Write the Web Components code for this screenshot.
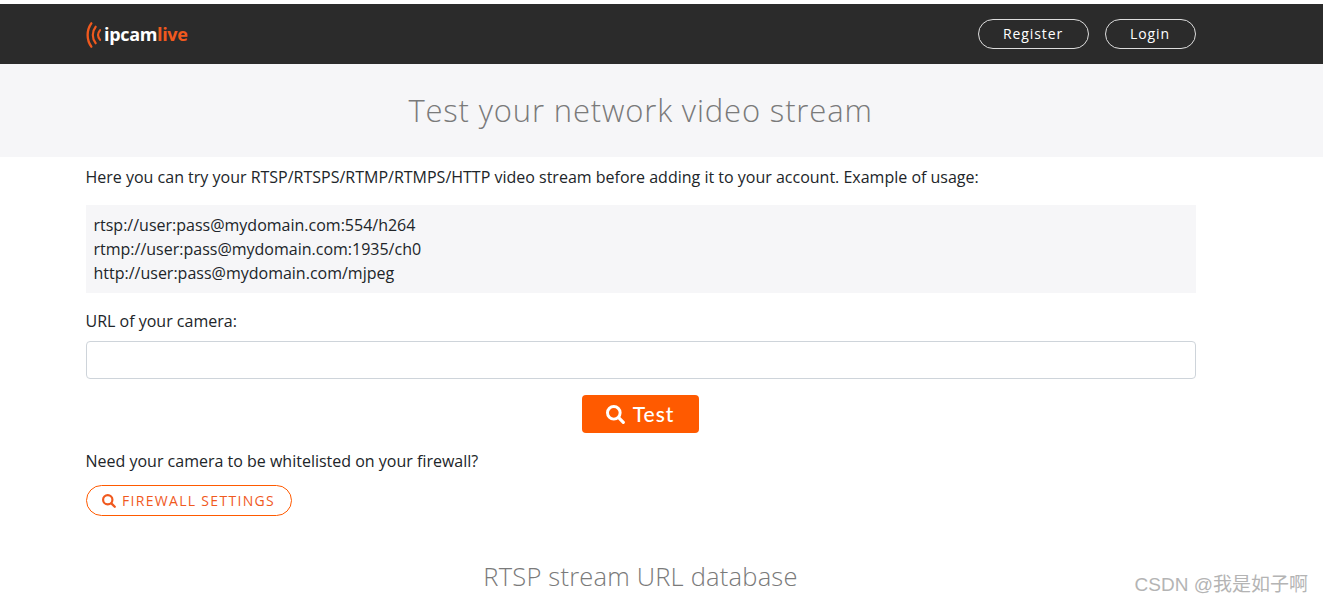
<!DOCTYPE html>
<html lang="en"><head><meta charset="utf-8"><title>Test your network video stream</title>
<style>
html,body{margin:0;padding:0;background:#fff;height:605px;overflow:hidden}
body{font-family:"Open Sans",sans-serif;font-size:16px;color:#212529;position:relative}
</style></head><body>
<ipc-header></ipc-header>
<ipc-hero>Test your network video stream</ipc-hero>
<ipc-main></ipc-main>
<ipc-watermark>CSDN @我是如子啊</ipc-watermark>
<script>
const SEARCH=s=>`<svg width="${s}" height="${s}" viewBox="0 0 18 18" fill="none" stroke="currentColor" aria-hidden="true"><circle cx="7.4" cy="7.4" r="6" stroke-width="2.8"/><path d="M12 12L16.4 16.4" stroke-width="3" stroke-linecap="round"/></svg>`;
function def(name,css,html){customElements.define(name,class extends HTMLElement{constructor(){super();this.attachShadow({mode:'open'}).innerHTML=`<style>${css}</style>${html}`;}});}

def('ipc-pill',`
:host{display:inline-flex;box-sizing:border-box;align-items:center;justify-content:center;height:var(--h,30px);width:var(--w,auto);border:1px solid var(--c,#ddd);border-radius:16px;color:var(--t,#fff);font:400 14px "Open Sans",sans-serif;letter-spacing:var(--ls,.9px);gap:var(--g,0)}
span{position:relative;top:var(--up,0)}
`,`<span><slot></slot></span>`);

def('ipc-header',`
:host{display:block;margin-top:4px;height:60px;background:#2b2b2b;font-family:"Open Sans",sans-serif}
.in{height:100%;width:1110px;margin-left:85.5px;display:flex;align-items:center;justify-content:space-between}
.logo{display:flex;align-items:center;gap:2px;font:700 18px "Open Sans",sans-serif;letter-spacing:-.33px;color:#fff}
.logo b{font-weight:700;color:#f0591e}
.logo svg{display:block;margin-top:1px}
nav{display:flex;gap:16px;--up:-1px}
`,`<div class="in"><div class="logo"><svg width="16.5" height="28" viewBox="0 0 17 28" fill="none" stroke="#f0591e" stroke-linecap="round"><path d="M5.5 2C.4 9 .4 19 5.5 26" stroke-width="2.4"/><path d="M10 5.5C6 10.5 6 17.5 10 22.5" stroke-width="2.2"/><path d="M14.5 9C12 12 12 16 14.5 19" stroke-width="2.2"/></svg><span>ipcam<b>live</b></span></div>
<nav><ipc-pill style="--w:111px">Register</ipc-pill><ipc-pill style="--w:91px">Login</ipc-pill></nav></div>`);

def('ipc-hero',`
:host{display:block;height:93px;background:#f6f6f8}
h1{margin:0;width:1281px;text-align:center;font:300 31px/92px "Open Sans",sans-serif;letter-spacing:.84px;color:#7a7a7a}
`,`<h1><slot></slot></h1>`);

def('ipc-code',`
:host{display:block;background:#f6f6f8;padding:8px;line-height:24px;color:#212529}
`,`<slot></slot>`);

def('ipc-main',`
:host{display:block;width:1110px;margin-left:85.5px;font:400 16px/24px "Open Sans",sans-serif;color:#212529}
p{margin:0}
.intro{padding-top:8px}
ipc-code{margin-top:16px}
.lab{margin-top:16px}
.inp{box-sizing:border-box;display:block;width:100%;height:38px;margin-top:8px;border:1px solid #ced4da;border-radius:4px;background:#fff}
.c{display:flex;justify-content:center;margin-top:16px;margin-left:-1px}
.test{box-sizing:border-box;width:117px;height:38px;background:#ff5a00;color:#fff;border:0;border-radius:4px;display:flex;align-items:center;justify-content:center;gap:8px;font:500 21px/34px Lato,sans-serif;letter-spacing:.9px;padding:0}
.test svg{position:relative;top:0}
.need{margin-top:16px}
.fw{margin-top:12px;display:block}
ipc-pill.fire{--c:#ff5a00;--t:#f0591e;--h:31px;--w:206px;--ls:1.32px;--up:1px}
h2{margin:45px 0 0;text-align:center;font:300 25.5px/30px "Open Sans",sans-serif;letter-spacing:.2px;color:#7a7a7a}
`,`<p class="intro">Here you can try your RTSP/RTSPS/RTMP/RTMPS/HTTP video stream before adding it to your account. Example of usage:</p>
<ipc-code>rtsp://user:pass@mydomain.com:554/h264<br>rtmp://user:pass@mydomain.com:1935/ch0<br>http://user:pass@mydomain.com/mjpeg</ipc-code>
<p class="lab">URL of your camera:</p>
<input class="inp" type="text" aria-label="URL of your camera">
<div class="c"><button class="test">${SEARCH(19)}<span>Test</span></button></div>
<p class="need">Need your camera to be whitelisted on your firewall?</p>
<div class="fw"><ipc-pill class="fire"><span style="display:inline-flex;align-items:center;gap:6px">${SEARCH(14)}FIREWALL SETTINGS</span></ipc-pill></div>
<h2>RTSP stream URL database</h2>`);

def('ipc-watermark',`
:host{position:absolute;right:15px;bottom:8px;font:400 19px "Liberation Sans","Noto Sans CJK SC",sans-serif;color:#b4b4b4;line-height:24px}
`,`<slot></slot>`);
</script>
</body></html>
